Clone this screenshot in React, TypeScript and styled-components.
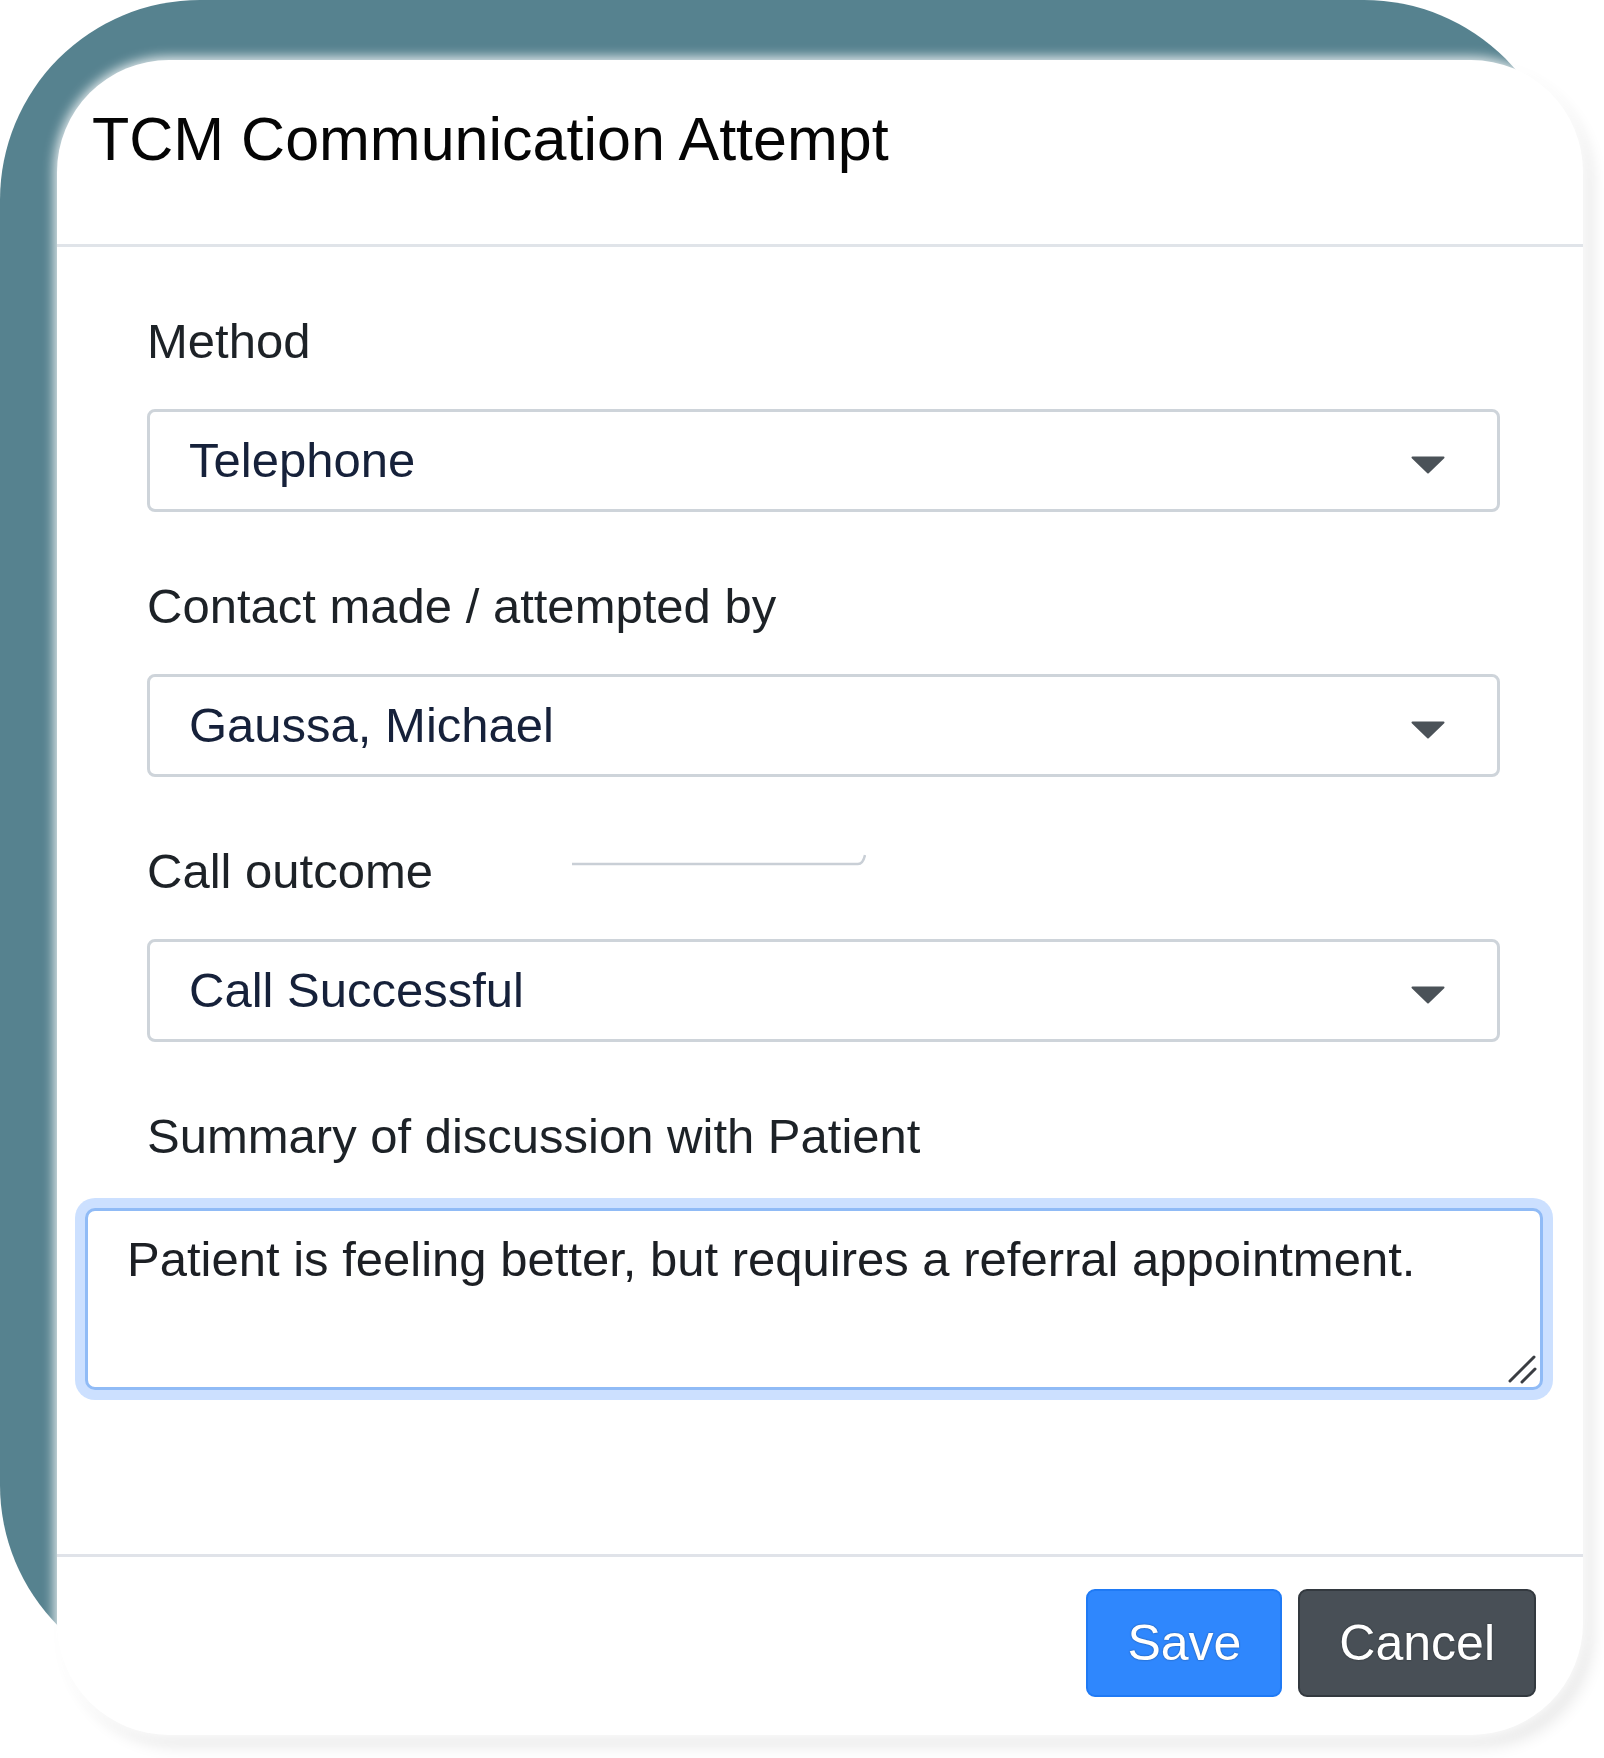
import React from "react";
import styled, { createGlobalStyle } from "styled-components";

const GlobalStyle = createGlobalStyle`
  * {
    box-sizing: border-box;
  }
  html,
  body {
    margin: 0;
    padding: 0;
    background: #ffffff;
  }
  body {
    font-family: "Liberation Sans", Arial, Helvetica, sans-serif;
  }
`;

const Stage = styled.div`
  display: grid;
  width: 1604px;
  height: 1758px;
  overflow: hidden;
  background: #ffffff;
`;

const Backdrop = styled.div`
  grid-area: 1 / 1;
  width: 1564px;
  height: 1685px;
  border-radius: 200px;
  background: #56828f;
`;

const Card = styled.div`
  grid-area: 1 / 1;
  margin: 60px 0 0 57px;
  width: 1526px;
  height: 1675px;
  display: flex;
  flex-direction: column;
  background: #ffffff;
  border-radius: 112px;
  box-shadow: 0 0 12px 3px rgba(255, 255, 255, 0.85),
    10px 12px 16px rgba(0, 0, 0, 0.09);
`;

const Header = styled.div`
  padding: 43px 35px 69px;
  border-bottom: 3px solid #e0e4e9;
`;

const Title = styled.h1`
  margin: 0;
  font-size: 61px;
  line-height: 72px;
  font-weight: 400;
  color: #050505;
`;

const Body = styled.div`
  flex: 1;
  display: flex;
  flex-direction: column;
  padding: 66px 83px 0 90px;
`;

const Field = styled.div`
  display: flex;
  flex-direction: column;
  & + & {
    margin-top: 66px;
  }
`;

const Label = styled.label<{ $gap: number }>`
  display: flex;
  align-items: flex-start;
  font-size: 49px;
  line-height: 56px;
  color: #1d2227;
  margin-bottom: ${(props) => props.$gap}px;
`;

const StrayRule = styled.svg`
  margin: 9px 0 0 139px;
  flex-shrink: 0;
`;

const SelectBox = styled.div`
  display: flex;
  align-items: center;
  height: 103px;
  padding: 0 52px 0 39px;
  border: 3px solid #ced4da;
  border-radius: 8px;
  background: #ffffff;
`;

const NativeSelect = styled.select`
  flex: 1;
  appearance: none;
  border: 0;
  outline: none;
  padding: 0;
  background: transparent;
  font-family: "Liberation Sans", Arial, Helvetica, sans-serif;
  font-size: 49px;
  line-height: 1.15;
  color: #16213a;
`;

const Caret = styled.svg`
  margin-top: 9px;
  flex-shrink: 0;
`;

const SummaryWrap = styled.div`
  position: relative;
  margin: 0 -43px 0 -62px;
`;

const Summary = styled.textarea`
  display: block;
  width: 100%;
  height: 182px;
  padding: 20px 39px;
  border: 3px solid #90bbf6;
  border-radius: 10px;
  box-shadow: 0 0 0 10px rgba(13, 110, 253, 0.21);
  outline: none;
  font-family: "Liberation Sans", Arial, Helvetica, sans-serif;
  font-size: 49px;
  line-height: 1.15;
  color: #1c1f24;
  background: #ffffff;
  resize: none;
`;

const Grip = styled.svg`
  position: absolute;
  right: 6px;
  bottom: 6px;
  pointer-events: none;
`;

const Footer = styled.div`
  display: flex;
  justify-content: flex-end;
  gap: 16px;
  padding: 32px 47px 38px;
  border-top: 3px solid #e0e3e9;
`;

const Button = styled.button<{ $variant: "primary" | "secondary" }>`
  height: 108px;
  padding: 0 39px;
  border: 2px solid
    ${(props) => (props.$variant === "primary" ? "#1f7af5" : "#33393f")};
  border-radius: 9px;
  background: ${(props) =>
    props.$variant === "primary" ? "#2f87fd" : "#484f56"};
  color: #ffffff;
  font-family: "Liberation Sans", Arial, Helvetica, sans-serif;
  font-size: 50px;
  line-height: 1;
  text-shadow: 0 0 2px rgba(0, 0, 0, 0.45);
  cursor: pointer;
`;

function DropArrow() {
  return (
    <Caret width="34" height="18" viewBox="0 0 34 18">
      <path
        d="M1.5 1.5 H32.5 L17 16.5 Z"
        fill="#4b5258"
        stroke="#4b5258"
        strokeWidth="2"
        strokeLinejoin="round"
      />
    </Caret>
  );
}

type SelectFieldProps = {
  id: string;
  label: string;
  value: string;
  options: string[];
  extra?: React.ReactNode;
};

function SelectField({ id, label, value, options, extra }: SelectFieldProps) {
  return (
    <Field>
      <Label htmlFor={id} $gap={40}>
        {label}
        {extra}
      </Label>
      <SelectBox>
        <NativeSelect id={id} defaultValue={value}>
          {options.map((option) => (
            <option key={option} value={option}>
              {option}
            </option>
          ))}
        </NativeSelect>
        <DropArrow />
      </SelectBox>
    </Field>
  );
}

function App() {
  return (
    <>
      <GlobalStyle />
      <Stage>
        <Backdrop />
        <Card>
          <Header>
            <Title>TCM Communication Attempt</Title>
          </Header>
          <Body>
            <SelectField
              id="method"
              label="Method"
              value="Telephone"
              options={["Telephone", "Video Visit", "Email", "In Person"]}
            />
            <SelectField
              id="contact"
              label="Contact made / attempted by"
              value="Gaussa, Michael"
              options={["Gaussa, Michael", "Reyes, Anna", "Patel, Sanjay"]}
            />
            <SelectField
              id="outcome"
              label="Call outcome"
              value="Call Successful"
              options={["Call Successful", "No Answer", "Left Voicemail"]}
              extra={
                <StrayRule width="294" height="14" viewBox="0 0 294 14">
                  <path
                    d="M0 12 H286 Q291 12 293 3"
                    fill="none"
                    stroke="#c9cfd6"
                    strokeWidth="2.5"
                  />
                </StrayRule>
              }
            />
            <Field>
              <Label htmlFor="summary" $gap={44}>
                Summary of discussion with Patient
              </Label>
              <SummaryWrap>
                <Summary
                  id="summary"
                  defaultValue="Patient is feeling better, but requires a referral appointment."
                />
                <Grip width="30" height="30" viewBox="0 0 30 30">
                  <path
                    d="M3 27 L27 3 M15 28 L28 15"
                    stroke="#3a3d42"
                    strokeWidth="3"
                    strokeLinecap="round"
                  />
                </Grip>
              </SummaryWrap>
            </Field>
          </Body>
          <Footer>
            <Button $variant="primary">Save</Button>
            <Button $variant="secondary">Cancel</Button>
          </Footer>
        </Card>
      </Stage>
    </>
  );
}

export default App;
